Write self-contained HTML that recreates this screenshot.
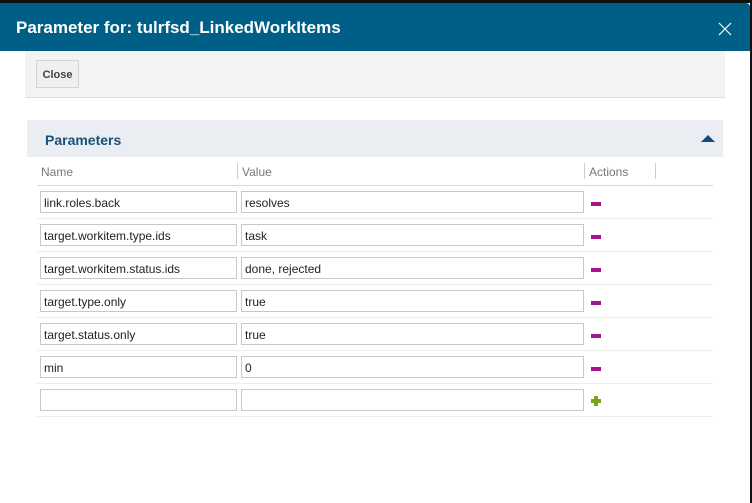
<!DOCTYPE html>
<html><head><style>
*{box-sizing:border-box;margin:0;padding:0}
body{width:752px;height:503px;background:#fff;font-family:"Liberation Sans",sans-serif;position:relative;overflow:hidden}
.top{position:absolute;left:0;top:0;width:752px;height:3px;background:#111}
.right{position:absolute;right:0;top:0;width:2px;height:503px;background:#111}
.title{position:absolute;left:0;top:3px;width:750px;height:48px;background:#005f87;border-top-right-radius:4px;color:#fff;font-weight:bold;font-size:17px;line-height:50px;padding-left:16px}
.x{position:absolute;right:18px;top:19px;width:14px;height:14px}
.tool{position:absolute;left:25px;top:51px;width:700px;height:47px;background:#f3f3f3;border-bottom:1px solid #ddd}
.btn{position:absolute;left:36px;top:60px;width:43px;height:28px;border:1px solid #d4d4d4;background:#f0f0f0;font-size:11px;font-weight:bold;color:#444;text-align:center;line-height:28px}
.ph{position:absolute;left:27px;top:120px;width:696px;height:37px;background:#eaeef2}
.ph span{position:absolute;left:18px;top:12px;font-weight:bold;font-size:14px;color:#1b5079}
.tri{position:absolute;left:674px;top:15px;width:0;height:0;border-left:7px solid transparent;border-right:7px solid transparent;border-bottom:7px solid #124b82}
.hd{position:absolute;top:165px;font-size:12px;color:#777}
.sep{position:absolute;top:163px;width:1px;height:16px;background:#ccc}
.line{position:absolute;left:37px;width:676px;height:1px;background:#eee}
.in{position:absolute;height:22px;border:1px solid #c8c8c8;font-size:12px;color:#222;line-height:22px;padding-left:3px}
.m{position:absolute;left:591px;width:10px;height:4px;background:#a5158c}
.p{position:absolute;left:591px}
</style></head><body>
<div class="top"></div><div class="right"></div>
<div class="title">Parameter for: tulrfsd_LinkedWorkItems
<svg class="x" viewBox="0 0 14 14"><path d="M1 1L13 13M13 1L1 13" stroke="#fff" stroke-width="1.2"/></svg></div>
<div class="tool"></div>
<div class="btn">Close</div>
<div class="ph"><span>Parameters</span><div class="tri"></div></div>
<div class="hd" style="left:41px">Name</div>
<div class="sep" style="left:237px"></div>
<div class="hd" style="left:242px">Value</div>
<div class="sep" style="left:584px"></div>
<div class="hd" style="left:589px">Actions</div>
<div class="sep" style="left:655px"></div>
<div class="line" style="top:185px;background:#d8d8d8"></div>
<div class="in" style="left:40px;top:191px;width:197px">link.roles.back</div><div class="in" style="left:241px;top:191px;width:343px">resolves</div><div class="m" style="top:202px"></div>
<div class="line" style="top:218px"></div>
<div class="in" style="left:40px;top:224px;width:197px">target.workitem.type.ids</div><div class="in" style="left:241px;top:224px;width:343px">task</div><div class="m" style="top:235px"></div>
<div class="line" style="top:251px"></div>
<div class="in" style="left:40px;top:257px;width:197px">target.workitem.status.ids</div><div class="in" style="left:241px;top:257px;width:343px">done, rejected</div><div class="m" style="top:268px"></div>
<div class="line" style="top:284px"></div>
<div class="in" style="left:40px;top:290px;width:197px">target.type.only</div><div class="in" style="left:241px;top:290px;width:343px">true</div><div class="m" style="top:301px"></div>
<div class="line" style="top:317px"></div>
<div class="in" style="left:40px;top:323px;width:197px">target.status.only</div><div class="in" style="left:241px;top:323px;width:343px">true</div><div class="m" style="top:334px"></div>
<div class="line" style="top:350px"></div>
<div class="in" style="left:40px;top:356px;width:197px">min</div><div class="in" style="left:241px;top:356px;width:343px">0</div><div class="m" style="top:367px"></div>
<div class="line" style="top:383px"></div>
<div class="in" style="left:40px;top:389px;width:197px"></div><div class="in" style="left:241px;top:389px;width:343px"></div>
<svg class="p" style="top:396px" width="10" height="10" viewBox="0 0 10 10"><path d="M3 0h4v3h3v4h-3v3h-4v-3h-3v-4h3z" fill="#7aa51a"/></svg>
<div class="line" style="top:416px"></div>
</body></html>
